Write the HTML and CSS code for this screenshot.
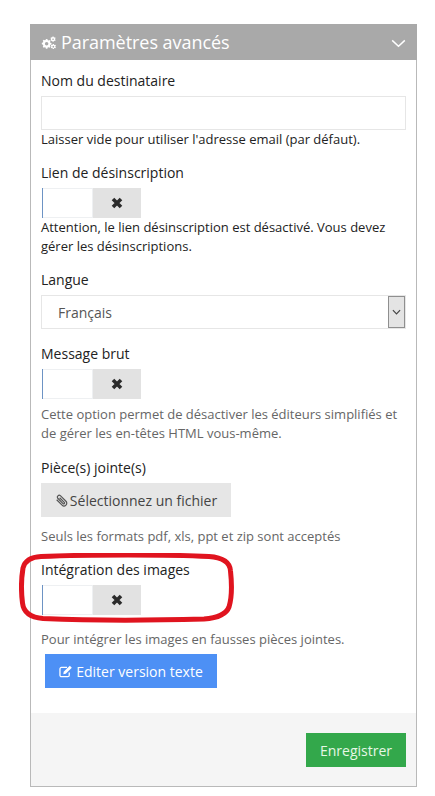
FILE: index.html
```html
<!DOCTYPE html>
<html lang="fr">
<head>
<meta charset="utf-8">
<title>Paramètres avancés</title>
<link rel="stylesheet" href="styles.css">
</head>
<body>
<section class="panel">
  <header class="panel-head">
    <h2 class="panel-title">
      <svg class="icon-gears" viewBox="0 0 16 14" width="15" height="13" aria-hidden="true">
        <path fill="#fff" fill-rule="evenodd" d="M5.2 3.2h1.6l.3 1.2.9.4 1.1-.6 1.1 1.1-.6 1.1.4.9 1.2.3v1.6l-1.2.3-.4.9.6 1.1-1.1 1.1-1.1-.6-.9.4-.3 1.2H5.2l-.3-1.2-.9-.4-1.1.6-1.1-1.1.6-1.1-.4-.9L.8 9v-1.6L2 7.1l.4-.9-.6-1.1 1.1-1.1 1.1.6.9-.4zM6 6.4a1.9 1.9 0 1 0 0 3.8 1.9 1.9 0 0 0 0-3.8z"/>
        <path fill="#fff" fill-rule="evenodd" d="M12.3.6h1.2l.2.8.6.3.8-.3.6 1-.6.6v.7l.6.6-.6 1-.8-.3-.6.3-.2.8h-1.2l-.2-.8-.6-.3-.8.3-.6-1 .6-.6v-.7l-.6-.6.6-1 .8.3.6-.3zm.6 2a.9.9 0 1 0 0 1.8.9.9 0 0 0 0-1.8zM12.6 8.6h1.2l.2.8.6.3.8-.3.6 1-.6.6v.7l.6.6-.6 1-.8-.3-.6.3-.2.8h-1.2l-.2-.8-.6-.3-.8.3-.6-1 .6-.6v-.7l-.6-.6.6-1 .8.3.6-.3zm.6 2a.9.9 0 1 0 0 1.8.9.9 0 0 0 0-1.8z"/>
      </svg>
      Paramètres avancés
    </h2>
    <svg class="chevron" viewBox="0 0 16 10" width="15" height="9" aria-hidden="true">
      <path d="M1 1.5l7 6.5 7-6.5" fill="none" stroke="#fff" stroke-width="1.6"/>
    </svg>
  </header>

  <div class="panel-body">
    <div class="group">
      <label class="label">Nom du destinataire</label>
      <input class="control" type="text">
      <p class="help dark">Laisser vide pour utiliser l'adresse email (par défaut).</p>
    </div>

    <div class="group">
      <label class="label">Lien de désinscription</label>
      <div class="switch">
        <span class="switch-on"></span>
        <span class="switch-off"><svg class="icon-x" viewBox="0 0 12 12" width="12" height="12" aria-hidden="true"><path d="M2 2l8 8M10 2l-8 8" stroke="#2b2b2b" stroke-width="3.6" fill="none"/></svg></span>
      </div>
      <p class="help dark">Attention, le lien désinscription est désactivé. Vous devez gérer les désinscriptions.</p>
    </div>

    <div class="group group-select">
      <label class="label">Langue</label>
      <div class="control select">
        <span class="select-value">Français</span>
        <span class="select-arrow"><svg viewBox="0 0 10 6" width="9" height="6" aria-hidden="true"><path d="M1 1l4 4 4-4" fill="none" stroke="#444" stroke-width="1.3"/></svg></span>
      </div>
    </div>

    <div class="group group-message">
      <label class="label">Message brut</label>
      <div class="switch">
        <span class="switch-on"></span>
        <span class="switch-off"><svg class="icon-x" viewBox="0 0 12 12" width="12" height="12" aria-hidden="true"><path d="M2 2l8 8M10 2l-8 8" stroke="#2b2b2b" stroke-width="3.6" fill="none"/></svg></span>
      </div>
      <p class="help spaced">Cette option permet de désactiver les éditeurs simplifiés et de gérer les en-têtes HTML vous-même.</p>
    </div>

    <div class="group">
      <label class="label">Pièce(s) jointe(s)</label>
      <div class="btn btn-file">
        <svg class="icon-clip" viewBox="0 0 14 14" width="13" height="13" aria-hidden="true"><path transform="matrix(-1 0 0 1 14 0)" d="M12.2 6.2L6.4 12a2.9 2.9 0 0 1-4.2-4.2l6-6a2 2 0 0 1 2.8 2.8L5.3 10.3a.9.9 0 0 1-1.3-1.3l5-5" fill="none" stroke="#555" stroke-width="1.3"/></svg>
        Sélectionnez un fichier
      </div>
      <p class="help spaced-md">Seuls les formats pdf, xls, ppt et zip sont acceptés</p>
    </div>

    <div class="group last">
      <label class="label">Intégration des images</label>
      <div class="switch">
        <span class="switch-on"></span>
        <span class="switch-off"><svg class="icon-x" viewBox="0 0 12 12" width="12" height="12" aria-hidden="true"><path d="M2 2l8 8M10 2l-8 8" stroke="#2b2b2b" stroke-width="3.6" fill="none"/></svg></span>
      </div>
      <p class="help spaced-lg">Pour intégrer les images en fausses pièces jointes.</p>
      <div class="btn btn-blue">
        <svg class="icon-edit" viewBox="0 0 15 14" width="14" height="13" aria-hidden="true"><path d="M11 8.2V11a1.6 1.6 0 0 1-1.6 1.6H2.6A1.6 1.6 0 0 1 1 11V4.2a1.6 1.6 0 0 1 1.6-1.6h6" fill="none" stroke="#fff" stroke-width="1.4"/><path d="M5 7.2l6.6-6.4 2.2 2.2L7.2 9.4 4.6 10z" fill="#fff"/></svg>
        Editer version texte
      </div>
    </div>
  </div>

  <footer class="panel-foot">
    <div class="btn btn-green">Enregistrer</div>
  </footer>

  <svg class="highlight" viewBox="0 0 216 70" width="216" height="70" aria-hidden="true">
    <path d="M22 3.5C70 1.5 150 1.5 190 3.5C204 4.5 211 9 211.5 18C213 32 212.5 46 210 54C207 62 198 65 185 66C130 67.5 70 67.5 24 65.5C11 64.5 4.5 59 3.5 50C2 38 2.5 24 4 15C6 7 12 4 22 3.5Z" fill="none" stroke="#e0141f" stroke-width="5"/>
  </svg>
</section>
</body>
</html>
```
FILE: styles.css
```css
* { box-sizing: border-box; }

html, body { margin: 0; padding: 0; }

body {
  background: #fff;
  font-family: "Open Sans", "Noto Sans", sans-serif;
  font-size: 13px;
  color: #222;
  padding: 24px 18px 9px 30px;
}

.panel {
  position: relative;
  width: 387px;
  height: 763px;
  border: 1px solid #b9b9b9;
  border-top: 0;
  display: flex;
  flex-direction: column;
}

.panel-head {
  height: 36px;
  margin: 0 -1px;
  background: #a9a9a9;
  color: #fff;
  display: flex;
  align-items: center;
  justify-content: space-between;
  padding: 0 11px;
}

.panel-title {
  margin: 0;
  font-size: 18px;
  font-weight: 400;
  display: flex;
  align-items: center;
  gap: 5px;
  letter-spacing: -0.05px;
}

.chevron { margin-top: 3px; }

.panel-body {
  flex: 1;
  padding: 11px 10px 0;
}

.group { margin-bottom: 14px; }
.group.last { margin-bottom: 0; }
.group-select { margin-bottom: 15px; }
.group-message { margin-bottom: 15px; }

.label {
  display: block;
  font-size: 14px;
  line-height: 20px;
  margin-bottom: 5px;
  color: #222;
}

.control {
  display: block;
  width: 365px;
  height: 34px;
  border: 1px solid #e6e6e6;
  background: #fff;
  padding: 0;
  margin: 0;
}

.select {
  display: flex;
  align-items: center;
  justify-content: space-between;
  padding: 0 0 0 16px;
  font-size: 14px;
  color: #555;
}

.select-arrow {
  width: 17px;
  height: 32px;
  background: #e4e4e4;
  border: 1px solid #8f8f8f;
  display: flex;
  align-items: center;
  justify-content: center;
}

.help {
  margin: 0;
  font-size: 13px;
  line-height: 19px;
  color: #666;
}

.help.dark { color: #222; }
.help.spaced { margin-top: 6px; }
.help.spaced-md { margin-top: 10px; }
.help.spaced-lg { margin-top: 15px; }

.switch {
  width: 99px;
  height: 30px;
  margin-left: 1px;
  display: flex;
  border-left: 1px solid #6d93c4;
}

.switch-on {
  width: 50px;
  border: 1px solid #eef0f2;
  border-left: 0;
  background: #fff;
}

.switch-off {
  flex: 1;
  background: #e2e2e2;
  display: flex;
  align-items: center;
  justify-content: center;
}

.btn {
  display: flex;
  align-items: center;
  justify-content: center;
  height: 34px;
  font-size: 14px;
}

.btn-file {
  width: 190px;
  background: #e6e6e6;
  color: #444;
  gap: 2px;
}

.btn-blue {
  width: 172px;
  margin: 5px 0 0 4px;
  background: #4d90f5;
  color: #fff;
  gap: 3px;
}

.btn-green {
  width: 100px;
  background: #33a84b;
  color: #e6f7e6;
}

.panel-foot {
  height: 73px;
  background: #f5f5f5;
  display: flex;
  align-items: center;
  justify-content: flex-end;
  padding: 1px 10px 0 0;
}

.highlight {
  position: absolute;
  left: -12px;
  top: 529px;
}
```
